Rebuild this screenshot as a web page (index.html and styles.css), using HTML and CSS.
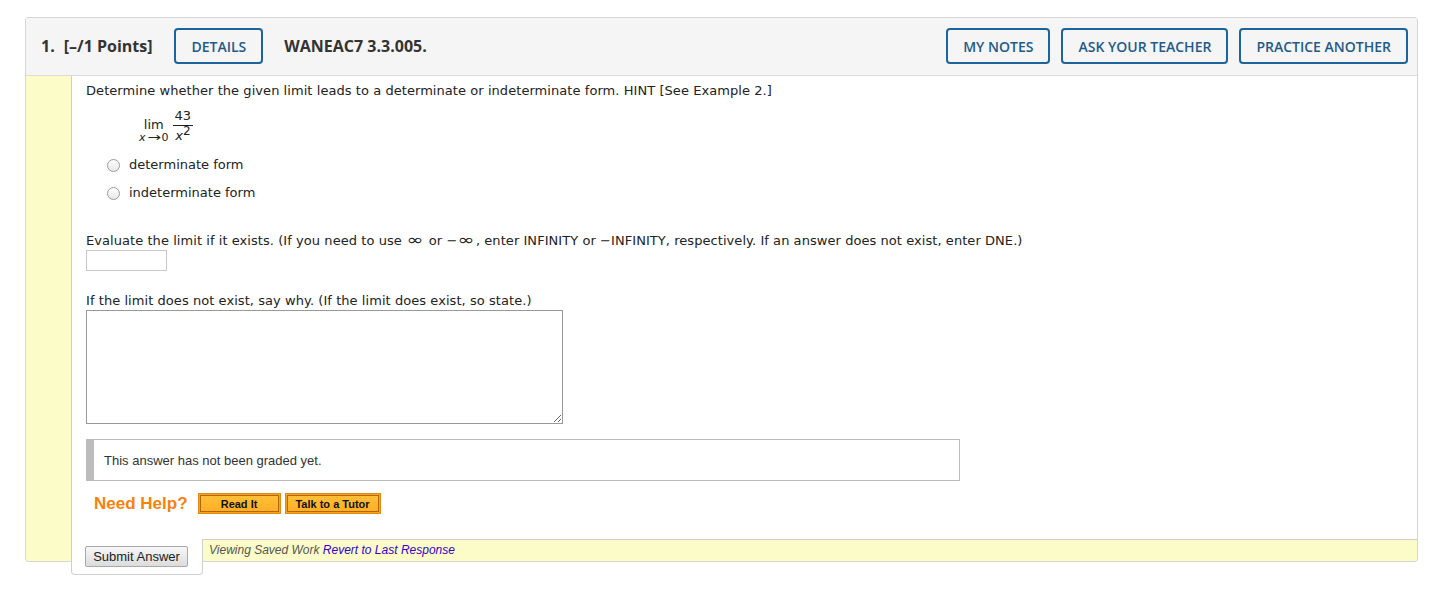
FILE: index.html
```html
<!DOCTYPE html>
<html>
<head>
<meta charset="utf-8">
<link rel="stylesheet" href="styles.css">
</head>
<body>
<div class="page">
  <div class="card">
    <div class="card-head">
      <div class="head-left">
        <span class="qnum">1.</span>
        <span class="points">[–/1 Points]</span>
        <button class="hbtn">DETAILS</button>
        <span class="qid">WANEAC7 3.3.005.</span>
      </div>
      <div class="head-right">
        <button class="hbtn">MY NOTES</button>
        <button class="hbtn">ASK YOUR TEACHER</button>
        <button class="hbtn">PRACTICE ANOTHER</button>
      </div>
    </div>
    <div class="card-body">
      <div class="strip"></div>
      <div class="main">
        <div class="question">
          <p class="q-text">Determine whether the given limit leads to a determinate or indeterminate form. HINT [See Example 2.]</p>
          <div class="math">
            <div class="lim">
              <span class="lim-word">lim</span>
              <span class="lim-sub"><i>x</i><span class="arrow">→</span>0</span>
            </div>
            <div class="frac">
              <span class="num">43</span>
              <span class="den"><i>x</i><sup>2</sup></span>
            </div>
          </div>
          <div class="radios">
            <label class="radio"><span class="dot"></span>determinate form</label>
            <label class="radio"><span class="dot"></span>indeterminate form</label>
          </div>
          <p class="q-text eval">Evaluate the limit if it exists. (If you need to use <span class="inf">∞</span> or −<span class="inf">∞</span>, enter INFINITY or −INFINITY, respectively. If an answer does not exist, enter DNE.)</p>
          <input class="answer" type="text">
          <p class="q-text why">If the limit does not exist, say why. (If the limit does exist, so state.)</p>
          <textarea class="why-box"></textarea>
          <div class="graded">This answer has not been graded yet.</div>
          <div class="help">
            <span class="need">Need Help?</span>
            <button class="obtn read">Read It</button>
            <button class="obtn tutor">Talk to a Tutor</button>
          </div>
        </div>
        <div class="foot">
          <div class="tab"><button class="submit">Submit Answer</button></div>
          <div class="band"><i class="saved">Viewing Saved Work</i> <a class="revert">Revert to Last Response</a></div>
        </div>
      </div>
    </div>
  </div>
</div>
</body>
</html>
```

FILE: styles.css
```css
html, body {
  margin: 0;
  padding: 0;
  background: #fff;
}

.page {
  padding: 17px 16px 20px 25px;
}

.card {
  border: 1px solid #d6d6d6;
  border-radius: 3px;
  width: 1391px;
}

.card-head {
  background: #f5f5f5;
  border-bottom: 1px solid #dcdcdc;
  display: flex;
  align-items: center;
  justify-content: space-between;
  padding: 0 9px 1px 15px;
  box-sizing: border-box;
  height: 58px;
  font-family: "Open Sans", "Liberation Sans", sans-serif;
}

.head-left, .head-right {
  display: flex;
  align-items: center;
}

.head-right {
  gap: 11px;
}

.qnum {
  font-weight: 700;
  font-size: 16px;
  color: #333;
  margin-right: 9px;
}

.points {
  font-weight: 700;
  font-size: 16px;
  color: #333;
  margin-right: 22px;
}

.qid {
  font-weight: 700;
  font-size: 16px;
  color: #333;
  margin-left: 21px;
}

.hbtn {
  height: 36px;
  border: 2px solid #1d649c;
  border-radius: 4px;
  background: transparent;
  color: #1f5a8a;
  font-family: "Open Sans", "Liberation Sans", sans-serif;
  font-weight: 600;
  font-size: 14px;
  padding: 0 15px;
  margin: 0;
  cursor: pointer;
}

.card-body {
  display: flex;
}

.strip {
  width: 45px;
  background: #fcfcc9;
  border-bottom-left-radius: 3px;
}

.main {
  flex: 1;
  border-left: 1px solid #cfcfcf;
  display: flex;
  flex-direction: column;
}

.question {
  padding: 7px 14px 0 14px;
  font-family: "DejaVu Sans", Verdana, sans-serif;
  font-size: 13px;
  color: #222;
  height: 456px;
}

.q-text {
  margin: 0;
  line-height: 16px;
  letter-spacing: 0.06px;
}

.inf {
  display: inline-block;
  font-size: 15px;
  line-height: 0;
  transform: scaleX(1.35);
  margin: 0 3px;
}

.math {
  display: flex;
  align-items: flex-start;
  margin: 9px 0 0 53px;
  height: 36px;
}

.lim {
  display: flex;
  flex-direction: column;
  align-items: center;
  margin-right: 4px;
  padding-top: 10px;
}

.lim-word {
  font-size: 13px;
  line-height: 13px;
}

.lim-sub {
  font-size: 11px;
  line-height: 13px;
}

.arrow {
  font-size: 12px;
  display: inline-block;
  transform: scaleX(1.35);
  margin: 0 3px;
}

.lim-sub i, .den i {
  font-style: italic;
}

.frac {
  display: flex;
  flex-direction: column;
  align-items: center;
}

.num {
  font-size: 13px;
  line-height: 15px;
  border-bottom: 1px solid #222;
  padding: 0 2px 2px;
}

.den {
  font-size: 13px;
  line-height: 15px;
  padding-top: 2px;
}

.den sup {
  font-size: 12px;
  line-height: 0;
  vertical-align: 5px;
}

.radios {
  margin: 13px 0 0 20px;
  display: flex;
  flex-direction: column;
  gap: 12px;
}

.radio {
  display: flex;
  align-items: center;
  line-height: 16px;
}

.dot {
  box-sizing: border-box;
  width: 13px;
  height: 13px;
  border: 1px solid #9a9a9a;
  border-radius: 50%;
  background: linear-gradient(#fdfdfd, #e8e8e8);
  margin: 0 9px 0 1px;
}

.eval {
  margin-top: 32px;
}

.answer {
  display: block;
  box-sizing: border-box;
  width: 81px;
  height: 21px;
  border: 1px solid #c8c8c8;
  margin: 1px 0 0 0;
  padding: 0 3px;
}

.why {
  margin-top: 22px;
}

.why-box {
  display: block;
  box-sizing: border-box;
  width: 477px;
  height: 114px;
  border: 1px solid #999;
  margin: 1px 0 0 0;
  resize: both;
}

.graded {
  margin-top: 15px;
  width: 874px;
  box-sizing: border-box;
  height: 42px;
  border: 1px solid #bcbcbc;
  border-left: 8px solid #bcbcbc;
  padding-left: 10px;
  display: flex;
  align-items: center;
  font-family: "Liberation Sans", Arial, sans-serif;
  font-size: 13px;
  color: #333;
}

.help {
  display: flex;
  align-items: center;
  margin-top: 12px;
  padding-left: 8px;
}

.need {
  font-family: "Liberation Sans", Arial, sans-serif;
  font-weight: 700;
  font-size: 17px;
  color: #f7820c;
  margin-right: 10px;
}

.obtn {
  height: 21px;
  box-sizing: border-box;
  border: 1px solid #e38a12;
  background: linear-gradient(#ffc13c, #ffad22);
  box-shadow: inset 0 0 0 1px #f7a21c, inset 0 0 0 2px #b26606;
  font-family: "Liberation Sans", Arial, sans-serif;
  font-weight: 700;
  font-size: 11px;
  color: #111;
  padding: 0;
  margin: 0 4px 0 0;
}

.read { width: 83px; }
.tutor { width: 96px; }

.foot {
  display: flex;
  align-items: flex-start;
}

.tab {
  width: 132px;
  height: 36px;
  box-sizing: border-box;
  background: #fff;
  border-left: 1px solid #cfcfcf;
  border-right: 1px solid #cfcfcf;
  border-bottom: 1px solid #cfcfcf;
  border-bottom-right-radius: 4px;
  border-bottom-left-radius: 4px;
  margin-bottom: -14px;
  margin-left: -1px;
  padding: 7px 0 0 13px;
  position: relative;
  z-index: 1;
}

.submit {
  height: 21px;
  box-sizing: border-box;
  width: 103px;
  border: 1px solid #a9a9a9;
  border-radius: 2px;
  background: linear-gradient(#f7f7f7, #dcdcdc);
  font-family: "Liberation Sans", Arial, sans-serif;
  font-size: 13px;
  color: #222;
  padding: 0;
}

.band {
  flex: 1;
  height: 22px;
  box-sizing: border-box;
  background: #fcfcc9;
  border-top: 1px solid #cfcfcf;
  border-bottom-right-radius: 3px;
  padding: 3px 0 0 6px;
  font-family: "Liberation Sans", Arial, sans-serif;
  font-size: 12px;
}

.saved {
  color: #555;
}

.revert {
  color: #3300cc;
  font-style: italic;
}
```
